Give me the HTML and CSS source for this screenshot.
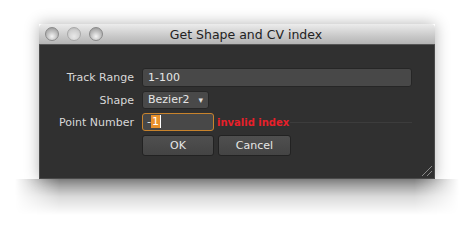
FILE: index.html
```html
<!DOCTYPE html>
<html>
<head>
    <title>Get Shape and CV index</title>
    <link rel="stylesheet" href="styles.css">
</head>
<body>
    <div class="window">
        <div class="titlebar">
            <div class="lights">
                <span class="light"></span>
                <span class="light"></span>
                <span class="light"></span>
            </div>
            <div class="title">Get Shape and CV index</div>
        </div>

        <div class="content">
            <div class="form">
                <label>Track Range</label>
                <div class="field">1-100</div>

                <label>Shape</label>
                <div class="row">
                    <div class="dropdown">Bezier2 <span class="arrow">&#9662;</span></div>
                </div>

                <label>Point Number</label>
                <div class="row">
                    <div class="field point">-<span class="sel">1</span></div>
                    <span class="error">invalid index</span>
                    <span class="rule"></span>
                </div>

                <span></span>
                <div class="row buttons">
                    <button class="btn">OK</button>
                    <button class="btn">Cancel</button>
                </div>
            </div>
            <div class="grip"></div>
        </div>
    </div>
    <div class="drop"></div>
</body>
</html>
```

FILE: styles.css
```css
* {
    box-sizing: border-box;
}

body {
    margin:0;
    background:#fff;
    font-family:"DejaVu Sans", "Liberation Sans", sans-serif;
}

.window {
    position:relative;
    z-index:1;
    width:396px;
    margin:24px 0 0 39px;
    box-shadow:0 0 14px rgba(0, 0, 0, 0.3);
}

.drop {
    width:444px;
    height:36px;
    margin-left:15px;
    background:linear-gradient(rgba(0, 0, 0, 0.42), rgba(0, 0, 0, 0.14) 50%, rgba(0, 0, 0, 0));
    -webkit-mask-image:linear-gradient(to right, transparent, #000 10%, #000 90%, transparent);
    mask-image:linear-gradient(to right, transparent, #000 10%, #000 90%, transparent);
}

.titlebar {
    height:21px;
    display:flex;
    align-items:center;
    background:linear-gradient(#ececec, #c9c9c9 60%, #b4b4b4);
    border-bottom:1px solid #555;
    border-radius:4px 4px 0 0;
}

.lights {
    display:flex;
    gap:8px;
    padding-left:6px;
}

.light {
    width:14px;
    height:14px;
    border-radius:50%;
    border:1px solid #8a8a8a;
    background:radial-gradient(circle at 50% 70%, #f4f4f4 0%, #c4c4c4 45%, #8e8e8e 100%);
}

.light:nth-child(2) {
    background:radial-gradient(circle at 50% 70%, #e8e8e8 0%, #cfcfcf 60%, #b0b0b0 100%);
    border-color:#a8a8a8;
}

.title {
    flex:1;
    text-align:center;
    font-size:12.5px;
    color:#222;
    padding-right:46px;
}

.content {
    position:relative;
    height:134px;
    background:#303030;
    padding:23px 22px 0 0;
    border:1px solid #4a4a4a;
    border-top:none;
}

.form {
    display:grid;
    grid-template-columns:94px 1fr;
    column-gap:8px;
    row-gap:4px;
    font-size:11px;
    color:#d8d8d8;
}

label {
    text-align:right;
    align-self:center;
}

.row {
    display:flex;
    align-items:center;
}

.field {
    height:19px;
    line-height:17px;
    padding:0 5px;
    background:#484848;
    border:1px solid #262626;
    border-radius:3px;
    color:#e6e6e6;
}

.dropdown {
    width:67px;
    height:18px;
    line-height:16px;
    padding:0 5px;
    background:#494949;
    border:1px solid #262626;
    border-radius:3px;
    color:#e6e6e6;
    display:flex;
    justify-content:space-between;
}

.arrow {
    font-size:9px;
    color:#ddd;
}

.point {
    width:72px;
    height:18px;
    line-height:16px;
    border-color:#c8832c;
    padding-left:4px;
}

.sel {
    background:#e8912c;
    color:#fff;
    padding:0 1px;
    border-right:1px solid #fff;
}

.error {
    color:#e8202a;
    font-weight:bold;
    font-size:10px;
    margin-left:3px;
}

.rule {
    flex:1;
    height:1px;
    background:#1c1c1c;
    border-bottom:1px solid #3c3c3c;
    margin-left:1px;
}

.buttons {
    gap:4px;
}

.btn {
    width:73px;
    height:21px;
    background:linear-gradient(#4f4f4f, #444);
    border:1px solid #222;
    border-radius:3px;
    color:#e6e6e6;
    font-family:inherit;
    font-size:11px;
}

.btn:first-child {
    width:72px;
}

.grip {
    position:absolute;
    right:2px;
    bottom:2px;
    width:10px;
    height:10px;
    background:linear-gradient(135deg, transparent 45%, #888 46%, #888 54%, transparent 55%, transparent 70%, #888 71%, #888 79%, transparent 80%);
}
```
